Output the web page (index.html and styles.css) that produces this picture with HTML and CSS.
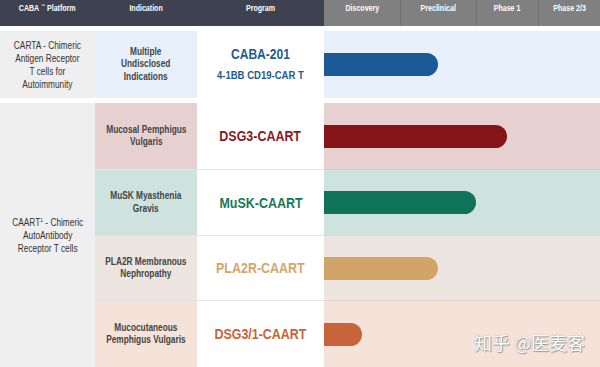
FILE: index.html
```html
<!DOCTYPE html>
<html>
<head>
<meta charset="utf-8">
<link rel="stylesheet" href="styles.css">
</head>
<body>
<div class="page">
  <div class="head">
    <div class="h dark"><span class="t">CABA <sup>™</sup> Platform</span></div>
    <div class="h dark"><span class="t">Indication</span></div>
    <div class="h dark"><span class="t">Program</span></div>
    <div class="h gray first"><span class="t">Discovery</span></div>
    <div class="h gray"><span class="t">Preclinical</span></div>
    <div class="h gray"><span class="t">Phase 1</span></div>
    <div class="h gray"><span class="t">Phase 2/3</span></div>
  </div>

  <div class="sec sec1">
    <div class="platform"><span class="t">CARTA - Chimeric<br>Antigen Receptor<br>T cells for<br>Autoimmunity</span></div>
    <div class="ind caba"><span class="t">Multiple<br>Undisclosed<br>Indications</span></div>
    <div class="prog">
      <span class="t pname c-caba big">CABA-201</span>
      <span class="t pname c-caba small">4-1BB CD19-CAR T</span>
    </div>
    <div class="track caba">
      <div class="lane"></div><div class="lane"></div><div class="lane"></div><div class="lane"></div>
      <div class="bar b-caba" style="width:114px"></div>
    </div>
  </div>

  <div class="sec sec2">
    <div class="platform span4"><span class="t">CAART<sup>1</sup> - Chimeric<br>AutoAntibody<br>Receptor T cells</span></div>

    <div class="ind dsg3"><span class="t">Mucosal Pemphigus<br>Vulgaris</span></div>
    <div class="prog"><span class="t pname c-dsg3">DSG3-CAART</span></div>
    <div class="track dsg3">
      <div class="lane"></div><div class="lane"></div><div class="lane"></div><div class="lane"></div>
      <div class="bar b-dsg3" style="width:183px"></div>
    </div>

    <div class="ind musk sep"><span class="t">MuSK Myasthenia<br>Gravis</span></div>
    <div class="prog sep"><span class="t pname c-musk">MuSK-CAART</span></div>
    <div class="track musk sep">
      <div class="lane"></div><div class="lane"></div><div class="lane"></div><div class="lane"></div>
      <div class="bar b-musk" style="width:152px"></div>
    </div>

    <div class="ind pla sep"><span class="t">PLA2R Membranous<br>Nephropathy</span></div>
    <div class="prog sep"><span class="t pname c-pla">PLA2R-CAART</span></div>
    <div class="track pla sep">
      <div class="lane"></div><div class="lane"></div><div class="lane"></div><div class="lane"></div>
      <div class="bar b-pla" style="width:114px"></div>
    </div>

    <div class="ind dsg31 sep"><span class="t">Mucocutaneous<br>Pemphigus Vulgaris</span></div>
    <div class="prog sep"><span class="t pname c-dsg31">DSG3/1-CAART</span></div>
    <div class="track dsg31 sep">
      <div class="lane"></div><div class="lane"></div><div class="lane"></div><div class="lane"></div>
      <div class="bar b-dsg31" style="width:38px"></div>
    </div>
  </div>

  <div class="watermark">知乎 @医麦客</div>
</div>
</body>
</html>
```

FILE: styles.css
```css
html, body {
  margin: 0;
  padding: 0;
  background: #ffffff;
}
body {
  width: 600px;
  height: 367px;
  overflow: hidden;
  font-family: "Liberation Sans", Arial, sans-serif;
}
.page {
  position: relative;
  display: flex;
  flex-direction: column;
  width: 600px;
  height: 367px;
}
.t {
  display: inline-block;
  transform: scaleX(0.83);
  white-space: nowrap;
  text-align: center;
}
.head,
.sec {
  display: grid;
  grid-template-columns: 95px 102px 127px 76px 76px 62px 62px;
}
.head {
  height: 26px;
}
.h {
  color: #ffffff;
  font-weight: bold;
  font-size: 8.5px;
  line-height: 10px;
  text-align: center;
  padding-top: 3px;
  box-sizing: border-box;
}
.h sup {
  font-size: 5px;
  vertical-align: 3px;
  line-height: 0;
}
.h.dark {
  background: #3e4250;
}
.h.gray {
  background: #808080;
  border-left: 1px solid #6f6f6f;
}
.h.gray.first {
  border-left: none;
}
.sec1 {
  margin-top: 5px;
  grid-template-rows: 67px;
}
.sec2 {
  margin-top: 5px;
  grid-template-rows: 66px 66px 65px 67px;
}
.platform {
  background: #efefef;
  color: #333333;
  font-size: 10px;
  line-height: 13px;
  display: flex;
  align-items: center;
  justify-content: center;
}
.platform sup {
  font-size: 6px;
  vertical-align: 4px;
  line-height: 0;
}
.span4 {
  grid-row: 1 / 5;
  grid-column: 1;
}
.ind {
  color: #444444;
  font-weight: bold;
  font-size: 10px;
  line-height: 12.5px;
  display: flex;
  align-items: center;
  justify-content: center;
}
.prog {
  background: #ffffff;
  display: flex;
  flex-direction: column;
  align-items: center;
  justify-content: center;
}
.sep {
  border-top: 1px solid #e4e4e4;
}
.track.sep {
  border-top: 1px solid rgba(0, 0, 0, 0.05);
}
.pname {
  font-weight: bold;
  font-size: 15px;
  line-height: 18px;
}
.pname.big {
  font-size: 14.5px;
  line-height: 18px;
  margin-top: -3px;
}
.pname.small {
  font-size: 11.5px;
  line-height: 14px;
  margin-top: 5px;
}
.track {
  grid-column: 4 / 8;
  display: grid;
  grid-template-columns: 76px 76px 62px 62px;
  grid-template-rows: 1fr;
}
.lane {
  grid-row: 1;
  border-left: 1px solid rgba(0, 0, 0, 0.07);
}
.lane:first-child {
  border-left: none;
}
.bar {
  grid-row: 1;
  grid-column: 1 / 5;
  align-self: center;
  justify-self: start;
  height: 23px;
  border-radius: 0 12px 12px 0;
}

.caba { background: #e7f0fa; }
.dsg3 { background: #e7d1d0; }
.musk { background: #cfe3de; }
.pla { background: #ede6e0; }
.dsg31 { background: #f5e2d9; }

.c-caba { color: #1e5c90; }
.c-dsg3 { color: #8a1a1e; }
.c-musk { color: #137a5a; }
.c-pla { color: #d4a56b; }
.c-dsg31 { color: #c9643b; }

.b-caba { background: #1a5a96; }
.b-dsg3 { background: #851519; }
.b-musk { background: #0e7358; }
.b-pla { background: #d3a468; }
.b-dsg31 { background: #c8643a; }

.watermark {
  position: absolute;
  right: 15px;
  bottom: 15px;
  font-family: "Noto Sans CJK SC", sans-serif;
  font-size: 18px;
  line-height: 20px;
  color: #ffffff;
  text-shadow: 0 0 1px #8a8a8a, 1px 1px 1px #9a9a9a;
}
```
